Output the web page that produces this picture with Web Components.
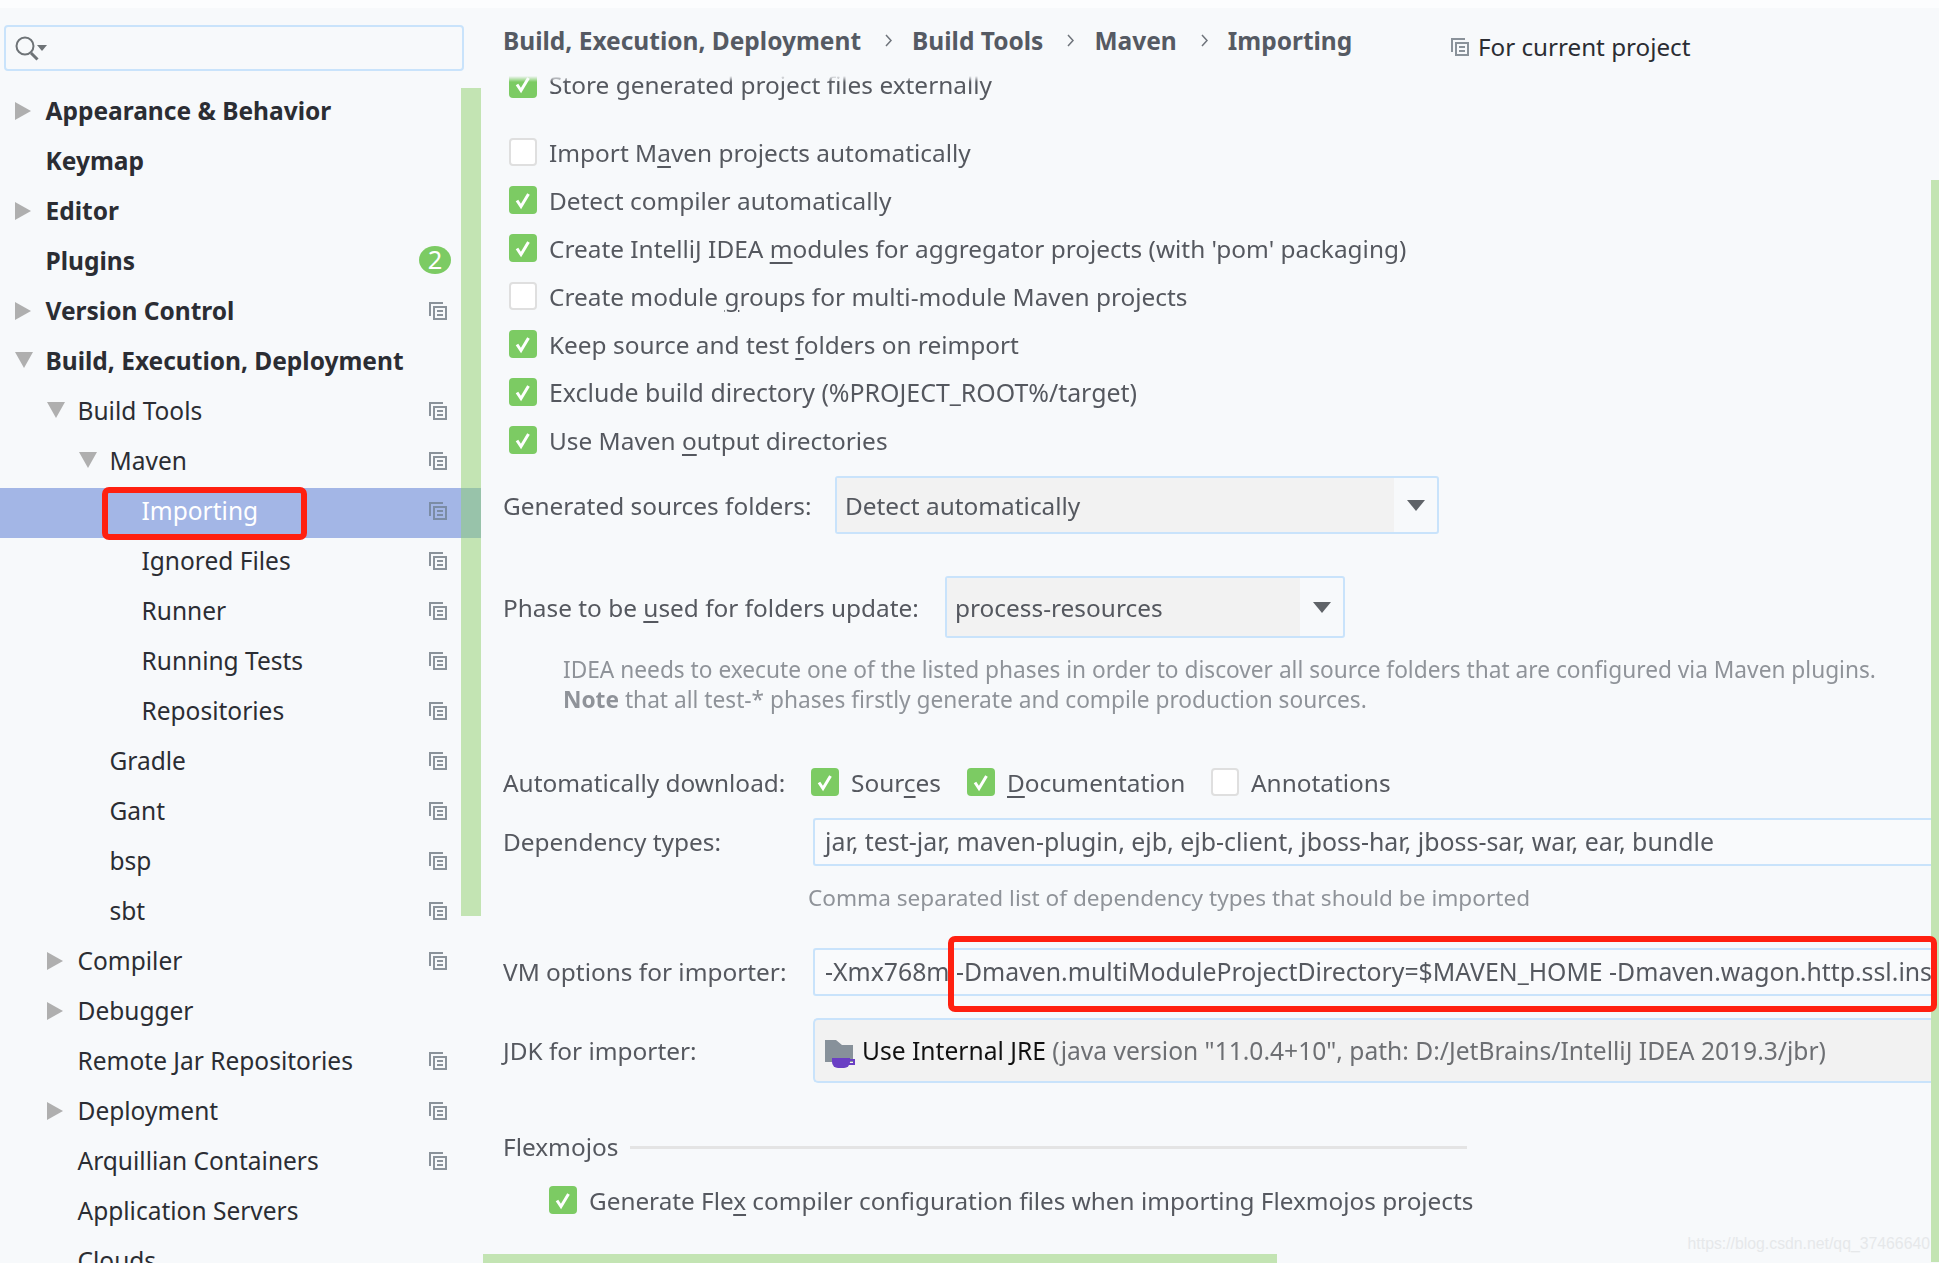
<!DOCTYPE html>
<html>
<head>
<meta charset="utf-8">
<title>Settings</title>
<style>
  html, body { margin: 0; height: 100%; overflow: hidden; background: #f7f9fb; }
  body { font: 24.4px "Noto Sans", "Open Sans", sans-serif; color: #55585f; }
  u { text-decoration-thickness: 2px; text-underline-offset: 4px; }
  b.note { font-weight: 700; }
  .dim { color: #6d6f73; }
  .strong { color: #111; }
</style>
</head>
<body>
<settings-window>
  <settings-tree slot="tree">
    <tree-row arrow="right" bold>Appearance &amp; Behavior</tree-row>
    <tree-row bold>Keymap</tree-row>
    <tree-row arrow="right" bold>Editor</tree-row>
    <tree-row bold badge="2">Plugins</tree-row>
    <tree-row arrow="right" bold copy>Version Control</tree-row>
    <tree-row arrow="down" bold>Build, Execution, Deployment</tree-row>
    <tree-row level="1" arrow="down" copy>Build Tools</tree-row>
    <tree-row level="2" arrow="down" copy>Maven</tree-row>
    <tree-row level="3" copy selected>Importing</tree-row>
    <tree-row level="3" copy>Ignored Files</tree-row>
    <tree-row level="3" copy>Runner</tree-row>
    <tree-row level="3" copy>Running Tests</tree-row>
    <tree-row level="3" copy>Repositories</tree-row>
    <tree-row level="2" copy>Gradle</tree-row>
    <tree-row level="2" copy>Gant</tree-row>
    <tree-row level="2" copy>bsp</tree-row>
    <tree-row level="2" copy>sbt</tree-row>
    <tree-row level="1" arrow="right" copy>Compiler</tree-row>
    <tree-row level="1" arrow="right">Debugger</tree-row>
    <tree-row level="1" copy>Remote Jar Repositories</tree-row>
    <tree-row level="1" arrow="right" copy>Deployment</tree-row>
    <tree-row level="1" copy>Arquillian Containers</tree-row>
    <tree-row level="1">Application Servers</tree-row>
    <tree-row level="1">Clouds</tree-row>
  </settings-tree>

  <bread-crumbs slot="crumbs">
    <span>Build, Execution, Deployment</span>
    <span>Build Tools</span>
    <span>Maven</span>
    <span>Importing</span>
  </bread-crumbs>

  <check-row checked style="margin-top:-16px">Store generated project files externally</check-row>
  <check-row style="margin-top:20px">Import M<u>a</u>ven projects automatically</check-row>
  <check-row checked>Detect compiler automatically</check-row>
  <check-row checked>Create IntelliJ IDEA <u>m</u>odules for aggregator projects (with 'pom' packaging)</check-row>
  <check-row>Create module <u>g</u>roups for multi-module Maven projects</check-row>
  <check-row checked>Keep source and test <u>f</u>olders on reimport</check-row>
  <check-row checked style="font-size:24.9px">Exclude build directory (%PROJECT_ROOT%/target)</check-row>
  <check-row checked>Use Maven <u>o</u>utput directories</check-row>

  <form-row style="--label:332px;margin-top:12px">
    <span slot="label">Generated sources folders:</span>
    <combo-box style="width:604px;height:58px;--arrow:43px">Detect automatically</combo-box>
  </form-row>
  <form-row style="--label:442px;margin-top:42px">
    <span slot="label">Phase to be <u>u</u>sed for folders update:</span>
    <combo-box style="width:400px;height:62px;--arrow:43px">process-resources</combo-box>
  </form-row>

  <hint-text style="margin:17px 0 0 60px;--size:22.7px">IDEA needs to execute one of the listed phases in order to discover all source folders that are configured via Maven plugins.<br><b class="note">Note</b> that all test-* phases firstly generate and compile production sources.</hint-text>

  <form-row style="--label:308px;margin-top:43px;height:48px">
    <span slot="label">Automatically download:</span>
    <check-box checked style="width:156px"><span>Sour<u>c</u>es</span></check-box>
    <check-box checked style="width:244px"><span><u>D</u>ocumentation</span></check-box>
    <check-box><span>Annotations</span></check-box>
  </form-row>

  <form-row style="--label:310px;margin-top:12px">
    <span slot="label" style="position:relative;top:-1px">Dependency types:</span>
    <text-field style="height:48px;font-size:24.9px">jar, test-jar, maven-plugin, ejb, ejb-client, jboss-har, jboss-sar, war, ear, bundle</text-field>
  </form-row>

  <hint-text style="margin:17px 0 0 305px;--size:22.6px">Comma separated list of dependency types that should be imported</hint-text>

  <form-row style="--label:310px;margin-top:35px">
    <span slot="label" style="position:relative;top:-1px">VM options for importer:</span>
    <text-field style="height:48px">-Xmx768m -Dmaven.multiModuleProjectDirectory=$MAVEN_HOME -Dmaven.wagon.http.ssl.insecure=true</text-field>
  </form-row>

  <form-row style="--label:310px;margin-top:22px">
    <span slot="label">JDK for importer:</span>
    <jdk-field style="height:65px"><span class="strong">Use Internal JRE</span>&nbsp;<span class="dim">(java version "11.0.4+10", path: D:/JetBrains/IntelliJ IDEA 2019.3/jbr)</span></jdk-field>
  </form-row>

  <group-title style="margin-top:49px">Flexmojos</group-title>
  <check-row checked style="margin:16px 0 0 40px;font-size:24.3px">Generate Fle<u>x</u> compiler configuration files when importing Flexmojos projects</check-row>
</settings-window>

<script>
const COPY_ICON = `<svg viewBox="0 0 18 18" width="18" height="18" fill="none" stroke="currentColor" stroke-width="2" style="display:block">
  <path d="M14 1H1V14"/><rect x="5" y="5" width="12" height="12"/><path d="M8 9h6M8 13h6"/></svg>`;

class SettingsWindow extends HTMLElement {
  constructor() {
    super();
    this.attachShadow({ mode: "open" });
    this.shadowRoot.innerHTML = `
    <style>
      :host { display: block; position: relative; width: 1939px; height: 1263px; overflow: hidden; background: #f7f9fb; }
      .top { height: 8px; background: #fcfdfe; }
      .body { display: flex; height: 1255px; }
      .side { flex: 0 0 481px; overflow: hidden; }
      .main { flex: 1; min-width: 0; padding-left: 22px; display: flex; flex-direction: column; }
      .head { flex: 0 0 68px; }
      .scroll {
        flex: 1; min-height: 0; overflow: hidden; margin-left: -22px; padding-left: 22px;
        -webkit-mask-image: linear-gradient(to bottom, transparent 0, #000 6px);
        mask-image: linear-gradient(to bottom, transparent 0, #000 6px);
      }
      .annot { position: absolute; box-sizing: border-box; border: 6px solid #ff2010; border-radius: 7px; }
      .bar { position: absolute; background: #c3e4b3; }
      .mark { position: absolute; right: 9px; bottom: 10px; color: #e6e8ea; font: 15.8px "Liberation Sans", sans-serif; }
    </style>
    <div class="top"></div>
    <div class="body">
      <div class="side"><slot name="tree"></slot></div>
      <div class="main">
        <div class="head"><slot name="crumbs"></slot></div>
        <div class="scroll"><slot></slot></div>
      </div>
    </div>
    <div class="bar" style="left:461px;top:88px;width:20px;height:828px"></div>
    <div class="bar" style="left:461px;top:488px;width:20px;height:50px;background:#98c3aa"></div>
    <div class="bar" style="left:1931px;top:180px;width:8px;height:1082px"></div>
    <div class="bar" style="left:483px;top:1254px;width:794px;height:9px"></div>
    <div class="annot" style="left:102px;top:487px;width:205px;height:53px"></div>
    <div class="annot" style="left:948px;top:936px;width:989px;height:76px"></div>
    <div class="mark">https://blog.csdn.net/qq_37466640</div>
    `;
  }
}

class SettingsTree extends HTMLElement {
  constructor() {
    super();
    this.attachShadow({ mode: "open" });
    this.shadowRoot.innerHTML = `
    <style>
      :host { display: block; color: #2b2d33; font-size: 24.5px; }
      .search {
        box-sizing: border-box; width: 460px; height: 46px; margin: 17px 0 17px 4px;
        border: 2px solid #c9e3fb; border-radius: 4px; display: flex; align-items: center; padding-left: 6px;
      }
      svg { display: block; }
    </style>
    <div class="search">
      <svg width="38" height="30" viewBox="0 0 38 30" fill="none">
        <circle cx="13" cy="13" r="8.5" stroke="#6e7377" stroke-width="2"/>
        <path d="M19 20l6.5 6.5" stroke="#6e7377" stroke-width="3"/>
        <path d="M25 12h10l-5 6z" fill="#6e7377"/>
      </svg>
    </div>
    <slot></slot>`;
  }
}

class TreeRow extends HTMLElement {
  constructor() {
    super();
    this.attachShadow({ mode: "open" });
  }

  connectedCallback() {
    const arrow = this.getAttribute("arrow");
    const level = +this.getAttribute("level") || 0;
    let arrowSvg = "";
    if (arrow === "right") arrowSvg = `<svg width="16" height="18"><path d="M0 0L16 9L0 18z" fill="#afafaf"/></svg>`;
    if (arrow === "down") arrowSvg = `<svg width="18" height="16"><path d="M0 0H18L9 16z" fill="#afafaf"/></svg>`;
    const badge = this.getAttribute("badge");
    this.shadowRoot.innerHTML = `
    <style>
      :host {
        display: flex; align-items: center; height: 50px; position: relative;
        padding-left: calc(45.5px + ${level} * 32px);
        box-sizing: border-box; font-weight: ${this.hasAttribute("bold") ? 700 : 400};
      }
      :host([selected]) { background: #a3b6e6; color: #fff; }
      .text { position: relative; top: -3px; white-space: nowrap; }
      .arrow { position: absolute; left: calc(15px + ${level} * 32px); top: 14px; }
      .arrow svg { display: block; }
      .copy { position: absolute; left: 429px; top: 14px; width: 18px; height: 18px; color: #8a929a; }
      :host([selected]) .copy { color: #7b8ca5; }
      .badge {
        position: absolute; left: 419px; top: 8px; width: 32px; height: 28px; border-radius: 50%;
        background: #7ccb63; color: #fff; font-size: 25.5px; font-weight: 400; line-height: 27px; text-align: center;
      }
    </style>
    ${arrowSvg ? `<span class="arrow">${arrowSvg}</span>` : ""}
    <span class="text"><slot></slot></span>
    ${this.hasAttribute("copy") ? `<span class="copy">${COPY_ICON}</span>` : ""}
    ${badge ? `<span class="badge">${badge}</span>` : ""}`;
  }
}

class BreadCrumbs extends HTMLElement {
  constructor() {
    super();
    this.attachShadow({ mode: "open" });
  }

  connectedCallback() {
    const parts = [...this.children];
    const chevron = `<svg width="7" height="13" viewBox="0 0 7 13" fill="none" style="display:block"><path d="M1 1l5 5.5L1 12" stroke="#6f747b" stroke-width="1.5"/></svg>`;
    parts.forEach((part, i) => {
      part.slot = "p" + i;
    });
    this.shadowRoot.innerHTML = `
    <style>
      :host { display: flex; align-items: center; height: 68px; position: relative; color: #555a63; font-size: 24.5px; font-weight: 700; white-space: nowrap; }
      .crumb { position: relative; top: -2px; }
      .chev { margin: 0 20px 0 24px; display: flex; position: relative; top: -2px; }
      .project { position: absolute; left: 948px; top: 22px; display: flex; align-items: center; gap: 9px; color: #2b2d33; font-weight: 400; font-size: 24.2px; }
      .project span { display: block; width: 18px; height: 18px; color: #8a929a; }
    </style>
    ${parts.map((p, i) => `<span class="crumb"><slot name="p${i}"></slot></span>${i < parts.length - 1 ? `<span class="chev">${chevron}</span>` : ""}`).join("")}
    <div class="project"><span>${COPY_ICON}</span>For current project</div>`;
  }
}

class CheckBox extends HTMLElement {
  constructor() {
    super();
    this.attachShadow({ mode: "open" });
  }

  connectedCallback() {
    const tick = this.hasAttribute("checked")
      ? `<svg width="28" height="28"><path d="M8 14.5L12 20.5L19.5 8" fill="none" stroke="#fff" stroke-width="3"/></svg>`
      : "";
    this.shadowRoot.innerHTML = `
    <style>
      :host { display: inline-flex; align-items: center; gap: 12px; white-space: nowrap; }
      .box { box-sizing: border-box; flex: 0 0 28px; height: 28px; border-radius: 4px; background: #fff; border: 2px solid #dfdfdf; }
      :host([checked]) .box { background: #7ccb63; border: 0; }
      svg { display: block; }
    </style>
    <span class="box">${tick}</span>
    <span class="label"><slot></slot></span>`;
  }
}

class CheckRow extends HTMLElement {
  constructor() {
    super();
    this.attachShadow({ mode: "open" });
  }

  connectedCallback() {
    const checked = this.hasAttribute("checked") ? "checked" : "";
    this.shadowRoot.innerHTML = `
    <style>
      :host { display: flex; align-items: center; height: 48px; padding-left: 6px; }
    </style>
    <check-box ${checked}><slot></slot></check-box>`;
  }
}

class FormRow extends HTMLElement {
  constructor() {
    super();
    this.attachShadow({ mode: "open" });
    this.shadowRoot.innerHTML = `
    <style>
      :host { display: flex; align-items: center; white-space: nowrap; }
      .label { flex: 0 0 var(--label); }
      .rest { flex: 1; min-width: 0; display: flex; align-items: center; }
    </style>
    <span class="label"><slot name="label"></slot></span>
    <span class="rest"><slot></slot></span>`;
  }
}

class ComboBox extends HTMLElement {
  constructor() {
    super();
    this.attachShadow({ mode: "open" });
    this.shadowRoot.innerHTML = `
    <style>
      :host { display: flex; box-sizing: border-box; border: 2px solid #c9e3fb; border-radius: 3px; }
      .value { flex: 1; display: flex; align-items: center; padding-left: 8px; background: #f2f2f2; }
      .arrow { flex: 0 0 var(--arrow); display: flex; align-items: center; justify-content: center; }
      svg { display: block; }
    </style>
    <span class="value"><slot></slot></span>
    <span class="arrow"><svg width="18" height="11"><path d="M0 0H18L9 11z" fill="#5f6368"/></svg></span>`;
  }
}

class TextField extends HTMLElement {
  constructor() {
    super();
    this.attachShadow({ mode: "open" });
    this.shadowRoot.innerHTML = `
    <style>
      :host {
        display: flex; align-items: center; box-sizing: border-box; flex: 1; min-width: 0; overflow: hidden; white-space: nowrap;
        border: 2px solid #c9e3fb; border-right: 0; border-radius: 3px 0 0 3px; padding: 0 0 2px 10px; background: #f9fafc; font-size: 24.8px;
      }
    </style>
    <slot></slot>`;
  }
}

class JdkField extends HTMLElement {
  constructor() {
    super();
    this.attachShadow({ mode: "open" });
    this.shadowRoot.innerHTML = `
    <style>
      :host {
        display: flex; align-items: center; box-sizing: border-box; flex: 1; min-width: 0; white-space: nowrap;
        border: 2px solid #c9e3fb; border-right: 0; border-radius: 5px 0 0 5px; padding-left: 10px; background: #f2f2f2; font-size: 24.6px;
      }
      svg { display: block; margin-right: 7px; flex: none; position: relative; top: 3px; }
    </style>
    <svg width="30" height="28" viewBox="0 0 30 28">
      <path d="M0 0H11L17 5H28V22H0z" fill="#87919a"/>
      <path d="M7 18H25V22A6 6 0 0 1 19 28H13A6 6 0 0 1 7 22z" fill="#6a3fc4"/>
      <path d="M25 20H29V24H24" fill="none" stroke="#6a3fc4" stroke-width="2"/>
    </svg>
    <span><slot></slot></span>`;
  }
}

class HintText extends HTMLElement {
  constructor() {
    super();
    this.attachShadow({ mode: "open" });
    this.shadowRoot.innerHTML = `
    <style>
      :host { display: block; color: #8f9399; font-size: var(--size, 23px); line-height: 30px; white-space: nowrap; }
    </style>
    <slot></slot>`;
  }
}

class GroupTitle extends HTMLElement {
  constructor() {
    super();
    this.attachShadow({ mode: "open" });
    this.shadowRoot.innerHTML = `
    <style>
      :host { display: flex; align-items: center; gap: 12px; height: 28px; margin-bottom: 2px; width: 964px; }
      i { flex: 1; height: 3px; background: #e4e4e4; position: relative; top: 1px; }
    </style>
    <span><slot></slot></span><i></i>`;
  }
}

customElements.define("settings-window", SettingsWindow);
customElements.define("settings-tree", SettingsTree);
customElements.define("tree-row", TreeRow);
customElements.define("bread-crumbs", BreadCrumbs);
customElements.define("check-box", CheckBox);
customElements.define("check-row", CheckRow);
customElements.define("form-row", FormRow);
customElements.define("combo-box", ComboBox);
customElements.define("text-field", TextField);
customElements.define("jdk-field", JdkField);
customElements.define("hint-text", HintText);
customElements.define("group-title", GroupTitle);
</script>
</body>
</html>
